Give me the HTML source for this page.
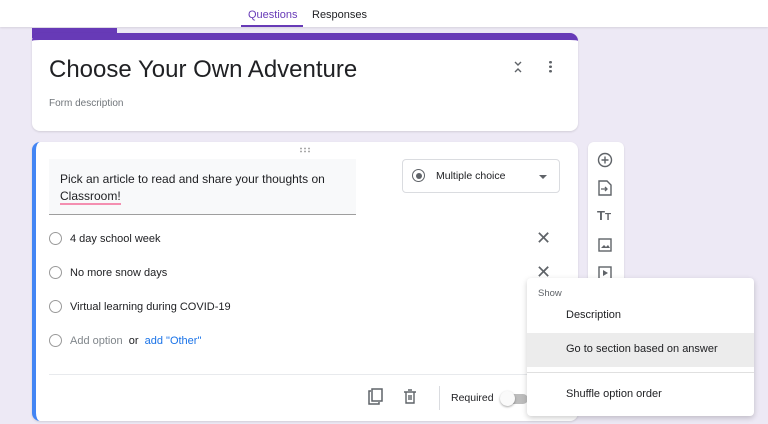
<!DOCTYPE html><html><head><style>
body{margin:0;width:768px;height:424px;overflow:hidden;background:#ede9f5;font-family:"Liberation Sans",sans-serif;position:relative}
.a{position:absolute}
.rad{position:absolute;width:11px;height:11px;border:1.5px solid #9a9a9a;border-radius:50%}
.opt{position:absolute;font-size:11px;color:#202124}
</style></head><body>
<div class="a" style="left:0;top:0;width:768px;height:27px;background:#fff;box-shadow:0 1px 2px rgba(0,0,0,.1)"></div>
<div class="a" style="left:248px;top:9px;font-size:11px;color:#673ab7">Questions</div>
<div class="a" style="left:241px;top:25px;width:62px;height:2px;background:#673ab7"></div>
<div class="a" style="left:312px;top:9px;font-size:11px;color:#202124">Responses</div>
<div class="a" style="left:32px;top:28px;width:85px;height:10px;background:#673ab7"></div>
<div class="a" style="left:32px;top:33px;width:546px;height:98px;background:#fff;border-radius:8px;border-top:7px solid #673ab7;box-sizing:border-box;box-shadow:0 1px 2px rgba(0,0,0,.12)"></div>
<div class="a" style="left:49px;top:56px;font-size:24px;color:#202124">Choose Your Own Adventure</div>
<div class="a" style="left:49px;top:98px;font-size:10px;color:#70757a">Form description</div>
<svg class="a" style="left:513px;top:60px" width="10" height="14" viewBox="0 0 10 14"><path d="M2 2l3 3 3-3M2 12l3-3 3 3" fill="none" stroke="#5f6368" stroke-width="1.4"/></svg>
<div class="a" style="left:549px;top:60px;width:3px;height:13px;background:radial-gradient(circle,#5f6368 1.3px,transparent 1.5px) 0 0/3px 4.5px"></div>
<div class="a" style="left:32px;top:142px;width:546px;height:279px;background:#fff;border-radius:8px;border-left:4px solid #4285f4;box-sizing:border-box;box-shadow:0 1px 2px rgba(0,0,0,.12)"></div>
<div class="a" style="left:299px;top:147px;width:12px;height:6px;background:radial-gradient(circle,#aaa 0.8px,transparent 1px) 0 0/4px 3px"></div>
<div class="a" style="left:49px;top:159px;width:307px;height:56px;background:#f8f9fa;border-bottom:1px solid #9e9e9e;box-sizing:border-box"></div>
<div class="a" style="left:60px;top:171px;font-size:12px;color:#202124;line-height:17px">Pick an article to read and share your thoughts on<br><span style="border-bottom:2px solid #f48fb1">Classroom!</span></div>
<div class="a" style="left:402px;top:159px;width:158px;height:34px;border:1px solid #dadce0;border-radius:4px;box-sizing:border-box"></div>
<div class="a" style="left:412px;top:169px;width:11px;height:11px;border:1.5px solid #5f6368;border-radius:50%"></div>
<div class="a" style="left:416px;top:173px;width:6px;height:6px;background:#5f6368;border-radius:50%"></div>
<div class="a" style="left:436px;top:170px;font-size:10.5px;color:#202124">Multiple choice</div>
<div class="a" style="left:539px;top:175px;border:4px solid transparent;border-top:4px solid #5f6368"></div>
<div class="rad" style="left:49px;top:232px"></div><div class="opt" style="left:70px;top:233px">4 day school week</div>
<div class="rad" style="left:49px;top:266px"></div><div class="opt" style="left:70px;top:267px">No more snow days</div>
<div class="rad" style="left:49px;top:300px"></div><div class="opt" style="left:70px;top:301px">Virtual learning during COVID-19</div>
<div class="rad" style="left:49px;top:334px"></div><div class="opt" style="left:70px;top:335px"><span style="color:#80868b">Add option</span> &nbsp;or &nbsp;<span style="color:#1a73e8">add "Other"</span></div>
<div class="a" style="left:536px;top:228px;font-size:18px;color:#5f6368">✕</div>
<div class="a" style="left:536px;top:262px;font-size:18px;color:#5f6368">✕</div>
<div class="a" style="left:49px;top:374px;width:529px;height:1px;background:#e8eaed"></div>
<svg class="a" style="left:368px;top:388px" width="16" height="18" viewBox="0 0 16 18"><path d="M3 3H1v13h10v-2" fill="none" stroke="#5f6368" stroke-width="1.5"/><rect x="4" y="1" width="10" height="12" fill="none" stroke="#5f6368" stroke-width="1.5"/></svg>
<svg class="a" style="left:403px;top:389px" width="14" height="15" viewBox="0 0 14 15"><path d="M1 3h12M5 1h4M3 3v11h8V3M6 6v5M8 6v5" fill="none" stroke="#5f6368" stroke-width="1.4"/></svg>
<div class="a" style="left:439px;top:386px;width:1px;height:24px;background:#dadce0"></div>
<div class="a" style="left:451px;top:392px;font-size:10.5px;color:#202124">Required</div>
<div class="a" style="left:502px;top:394px;width:26px;height:10px;background:#bdbdbd;border-radius:5px"></div>
<div class="a" style="left:500px;top:391px;width:15px;height:15px;background:#fafafa;border-radius:50%;box-shadow:0 1px 2px rgba(0,0,0,.35)"></div>
<div class="a" style="left:588px;top:142px;width:36px;height:150px;background:#fff;border-radius:6px;box-shadow:0 1px 2px rgba(0,0,0,.12)"></div>
<svg class="a" style="left:597px;top:152px" width="16" height="16"><circle cx="8" cy="8" r="6.5" fill="none" stroke="#5f6368" stroke-width="1.4"/><path d="M8 4.5v7M4.5 8h7" stroke="#5f6368" stroke-width="1.4"/></svg>
<svg class="a" style="left:598px;top:180px" width="14" height="16"><path d="M1 1h8l4 4v10H1z" fill="none" stroke="#5f6368" stroke-width="1.4"/><path d="M3 9h6M7 7l2 2-2 2" fill="none" stroke="#5f6368" stroke-width="1.3"/></svg>
<div class="a" style="left:597px;top:208px;font-size:13px;font-weight:bold;color:#5f6368">T<span style="font-size:10px">T</span></div>
<svg class="a" style="left:598px;top:238px" width="14" height="14"><rect x="1" y="1" width="12" height="12" fill="none" stroke="#5f6368" stroke-width="1.4"/><path d="M3 10l3-3 2 2 2-2 2 3z" fill="#5f6368"/></svg>
<svg class="a" style="left:598px;top:266px" width="14" height="14"><rect x="1" y="1" width="12" height="12" fill="none" stroke="#5f6368" stroke-width="1.4"/><path d="M5 4l5 3-5 3z" fill="#5f6368"/></svg>
<div class="a" style="left:527px;top:278px;width:227px;height:138px;background:#fff;border-radius:4px;box-shadow:0 2px 6px rgba(0,0,0,.2)"></div>
<div class="a" style="left:538px;top:288px;font-size:9.5px;color:#5f6368">Show</div>
<div class="a" style="left:566px;top:309px;font-size:11px;color:#202124">Description</div>
<div class="a" style="left:527px;top:333px;width:227px;height:34px;background:#ececec"></div>
<div class="a" style="left:566px;top:343px;font-size:11px;color:#202124">Go to section based on answer</div>
<div class="a" style="left:527px;top:372px;width:227px;height:1px;background:#e0e0e0"></div>
<div class="a" style="left:566px;top:388px;font-size:11px;color:#202124">Shuffle option order</div>
</body></html>
